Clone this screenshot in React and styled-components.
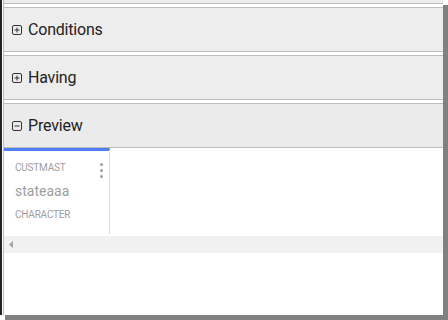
import styled, { createGlobalStyle } from "styled-components";

const GlobalStyle = createGlobalStyle`
  html, body {
    margin: 0;
    padding: 0;
    background: #ffffff;
    overflow: hidden;
  }
  body {
    font-family: Roboto, "Liberation Sans", sans-serif;
  }
`;

const Page = styled.div`
  width: 448px;
  height: 320px;
`;

const Dialog = styled.div`
  width: 443px;
  height: 315px;
  border-left: 2px solid #1f2329;
  box-shadow: 5px 5px 0 #808080;
  background: #ffffff;
  padding-left: 1px;
  box-sizing: border-box;
  overflow: hidden;
`;

const Inner = styled.div`
  height: 100%;
  border-left: 1px solid #bdbdbd;
  display: flex;
  flex-direction: column;
  gap: 3px;
`;

const Stub = styled.div`
  height: 3px;
  background: #ececec;
  border-bottom: 1px solid #bdbdbd;
`;

const Header = styled.div`
  height: 43px;
  background: ${(p) => (p.$open ? "#ebebeb" : "#ededed")};
  border-top: 1px solid #bdbdbd;
  border-bottom: 1px solid #bdbdbd;
  display: flex;
  align-items: center;
  gap: 6px;
  padding-left: 8px;
  font-size: 16px;
  letter-spacing: -0.2px;
  color: #222222;
`;

const Title = styled.span`
  line-height: 1;
  padding-top: 1px;
`;

const Body = styled.div`
  display: flex;
  flex-direction: column;
  gap: 2px;
  margin-top: -3px;
`;

const Card = styled.div`
  width: 106px;
  height: 86px;
  box-sizing: border-box;
  border-top: 3px solid #4d7ef7;
  border-right: 1px solid #dedede;
  position: relative;
  padding: 11px 0 0 11px;
  color: #9e9e9e;
`;

const Small = styled.div`
  font-size: 10px;
  line-height: 12px;
  letter-spacing: -0.2px;
  text-transform: uppercase;
`;

const Value = styled.div`
  font-size: 14px;
  line-height: 16px;
  margin: 9px 0 10px;
`;

const Kebab = styled.div`
  position: absolute;
  right: 6px;
  top: 12px;
  display: flex;
  flex-direction: column;
  gap: 3px;
  span {
    width: 3px;
    height: 3px;
    border-radius: 50%;
    background: #9e9e9e;
  }
`;

const ScrollTrack = styled.div`
  height: 17px;
  background: #f1f1f1;
  display: flex;
  align-items: center;
  padding-left: 5px;
`;

const BoxIcon = ({ minus }) => (
  <svg width="10" height="10" viewBox="0 0 10 10">
    <rect x="0.5" y="0.5" width="9" height="9" rx="1.5" fill="none" stroke="#333" strokeWidth="1" />
    <line x1="2.5" y1="5" x2="7.5" y2="5" stroke="#333" strokeWidth="1" />
    {!minus && <line x1="5" y1="2.5" x2="5" y2="7.5" stroke="#333" strokeWidth="1" />}
  </svg>
);

const Panel = ({ title, open }) => (
  <Header $open={open}>
    <BoxIcon minus={open} />
    <Title>{title}</Title>
  </Header>
);

export default function App() {
  return (
    <Page>
      <GlobalStyle />
      <Dialog>
        <Inner>
          <Stub />
          <Panel title="Conditions" />
          <Panel title="Having" />
          <Panel title="Preview" open />
          <Body>
            <Card>
              <Small>CUSTMAST</Small>
              <Value>stateaaa</Value>
              <Small>CHARACTER</Small>
              <Kebab>
                <span />
                <span />
                <span />
              </Kebab>
            </Card>
            <ScrollTrack>
              <svg width="4" height="7" viewBox="0 0 4 7">
                <path d="M4 0 L0 3.5 L4 7 Z" fill="#a3a3a3" />
              </svg>
            </ScrollTrack>
          </Body>
        </Inner>
      </Dialog>
    </Page>
  );
}
